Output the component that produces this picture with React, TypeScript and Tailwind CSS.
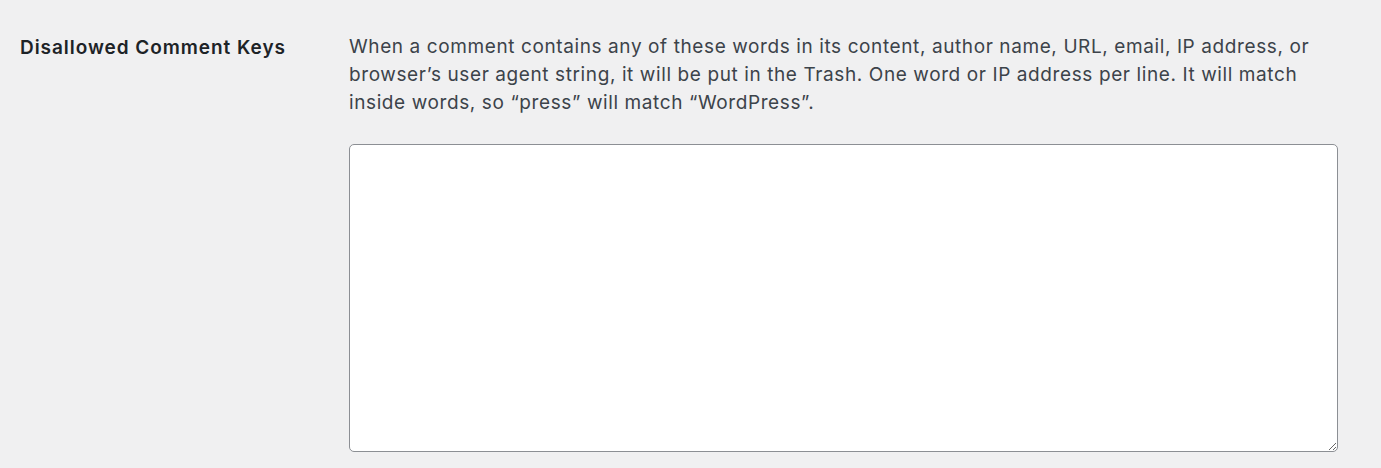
export default function App() {
  return (
    <div
      className="min-h-[468px] bg-[#f0f0f1] text-[19px] leading-[28px] tracking-[0.6px]"
      style={{ fontFamily: 'Inter, "Noto Sans", sans-serif' }}
    >
      <div className="flex pl-5 pt-[33px]">
        {/* Label */}
        <div className="w-[329px] shrink-0 pt-px">
          <label className="font-semibold tracking-[0.95px] text-[#1d2327]">Disallowed Comment Keys</label>
        </div>

        {/* Field */}
        <div className="w-[989px]">
          <p className="text-[#3c434a]">
            When a comment contains any of these words in its content, author name, URL, email, IP address, or
            browser’s user agent string, it will be put in the Trash. One word or IP address per line. It will match
            inside words, so “press” will match “WordPress”.
          </p>
          <textarea className="mt-[27px] block w-[989px] h-[308px] bg-white border border-[#8c8f94] rounded-[5px] p-2 outline-none" />
        </div>
      </div>
    </div>
  );
}
